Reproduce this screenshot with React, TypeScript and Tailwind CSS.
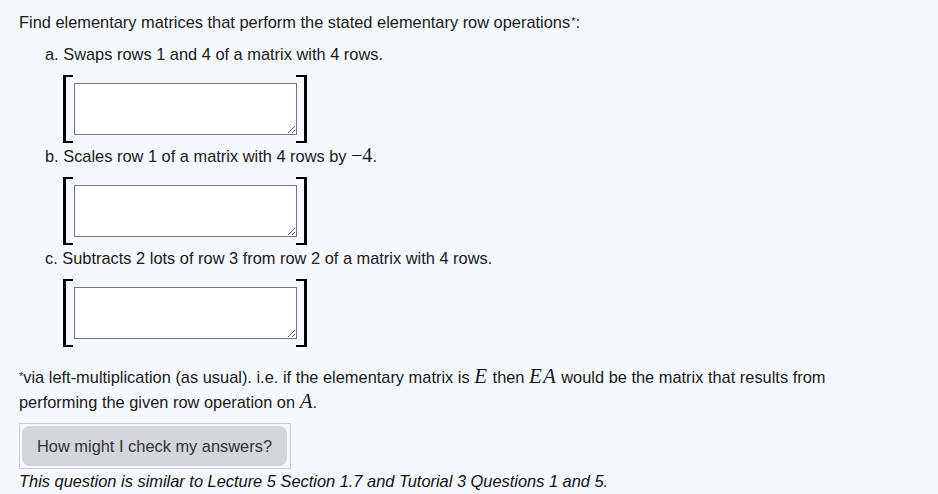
const MATH = { fontFamily: '"Liberation Serif", "DejaVu Serif", serif' };

function Matrix() {
  return (
    <div className="mt-[9px] ml-[44px] flex h-[68px] items-center">
      <div className="h-[68px] w-[10px] border-y-2 border-l-[3px] border-black" />
      <textarea className="ml-px h-[52px] w-[223px] border border-[#767676] bg-white outline-none" />
      <div className="-ml-px h-[68px] w-[11px] border-y-2 border-r-[3px] border-black" />
    </div>
  );
}

const PARTS: { label: string; text: React.ReactNode }[] = [
  { label: "a.", text: "Swaps rows 1 and 4 of a matrix with 4 rows." },
  {
    label: "b.",
    text: (
      <>
        Scales row 1 of a matrix with 4 rows by{" "}
        <span className="text-[20px] leading-none" style={MATH}>
          −4
        </span>
        .
      </>
    ),
  },
  { label: "c.", text: "Subtracts 2 lots of row 3 from row 2 of a matrix with 4 rows." },
];

export default function App() {
  return (
    <div
      className="min-h-[494px] w-[938px] bg-[#f5f8fd] px-[19px] pt-[10px] text-[16.4px] leading-6 text-[#1a1a1a]"
      style={{ fontFamily: '"Liberation Sans", Arial, sans-serif' }}
    >
      <p>
        Find elementary matrices that perform the stated elementary row operations
        <sup className="relative -top-[3px] ml-px text-[11px]">*</sup>:
      </p>

      <div className="mt-2">
        {PARTS.map((p) => (
          <div key={p.label} className="mb-px">
            <div className="pl-[26px]">
              {p.label} {p.text}
            </div>
            <Matrix />
          </div>
        ))}
      </div>

      <p className="mt-[18px] leading-[25px]">
        <sup className="relative -top-[3px] text-[11px]">*</sup>via left-multiplication (as usual). i.e. if the elementary matrix is{" "}
        <i className="text-[21px] leading-none tracking-[1px]" style={MATH}>E</i> then{" "}
        <i className="text-[21px] leading-none tracking-[1px]" style={MATH}>EA</i> would be the matrix that results from
        <br />
        performing the given row operation on <i className="text-[21px] leading-none" style={MATH}>A</i>.
      </p>

      <div className="mt-2 flex w-fit border border-[#cfcfcf] p-[2px] pr-[3px]">
        <button className="h-10 w-[265px] rounded-lg bg-[#d3d6db] pl-[15px] text-left text-[#333]">
          How might I check my answers?
        </button>
      </div>

      <p className="italic leading-6 text-[#111]">
        This question is similar to Lecture 5 Section 1.7 and Tutorial 3 Questions 1 and 5.
      </p>
    </div>
  );
}
